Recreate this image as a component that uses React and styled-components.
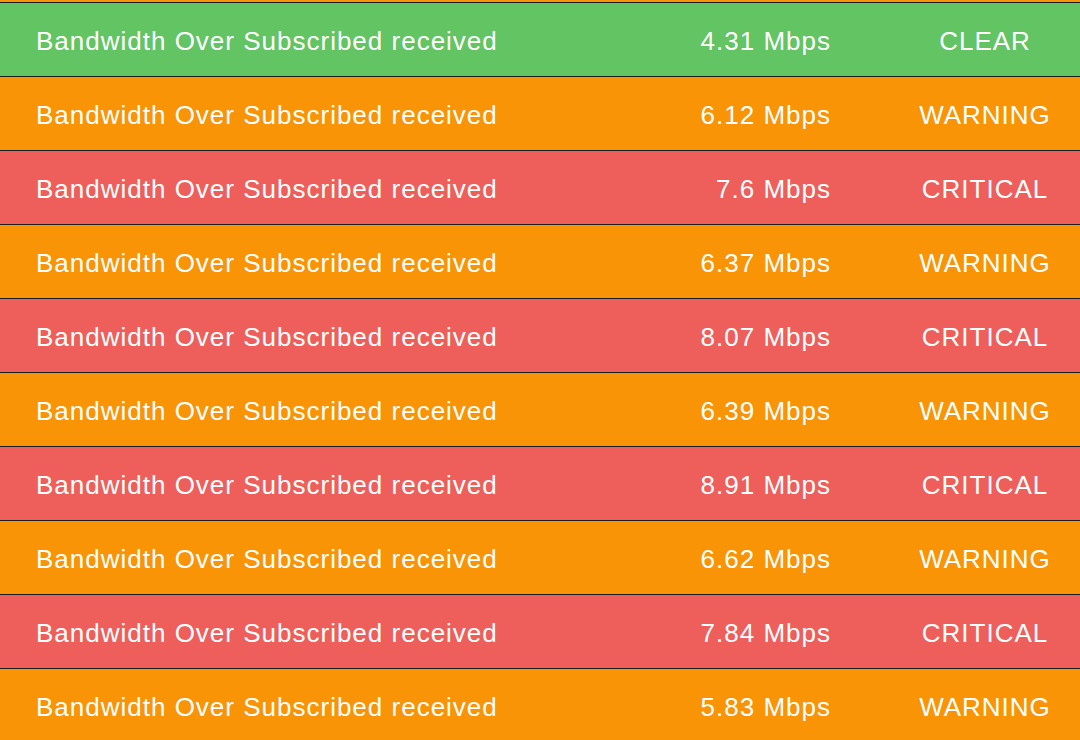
import React from 'react';
import styled, { createGlobalStyle } from 'styled-components';

const alerts = [
  { rate: '5.95 Mbps', status: 'WARNING' },
  { rate: '4.31 Mbps', status: 'CLEAR' },
  { rate: '6.12 Mbps', status: 'WARNING' },
  { rate: '7.6 Mbps', status: 'CRITICAL' },
  { rate: '6.37 Mbps', status: 'WARNING' },
  { rate: '8.07 Mbps', status: 'CRITICAL' },
  { rate: '6.39 Mbps', status: 'WARNING' },
  { rate: '8.91 Mbps', status: 'CRITICAL' },
  { rate: '6.62 Mbps', status: 'WARNING' },
  { rate: '7.84 Mbps', status: 'CRITICAL' },
  { rate: '5.83 Mbps', status: 'WARNING' },
  { rate: '6.04 Mbps', status: 'CRITICAL' },
];

const colors = {
  CLEAR: '#62c462',
  WARNING: '#f89406',
  CRITICAL: '#ee5f5b',
};

export default function App() {
  return (
    <>
      <GlobalStyle />
      <Viewport>
        <AlertList>
          {alerts.map((a, i) => (
            <AlertRow key={i} $status={a.status}>
              <Name>Bandwidth Over Subscribed received</Name>
              <Rate>{a.rate}</Rate>
              <Status>{a.status}</Status>
            </AlertRow>
          ))}
        </AlertList>
      </Viewport>
    </>
  );
}

// --- STYLED COMPONENTS ---

const GlobalStyle = createGlobalStyle`
  html, body {
    margin: 0;
    padding: 0;
    background: #1c1c1c;
  }
  body {
    font-family: "Liberation Sans", Arial, sans-serif;
  }
`;

// the list is scrolled: the previous row peeks in at the top
const Viewport = styled.div`
  width: 1080px;
  height: 740px;
  overflow: hidden;
`;

const AlertList = styled.div`
  display: flex;
  flex-direction: column;
  gap: 1px;
  background: #1c1c1c;
  margin-top: -71px;
`;

const AlertRow = styled.div`
  display: grid;
  grid-template-columns: 1fr 180px 190px;
  column-gap: 60px;
  align-items: center;
  box-sizing: border-box;
  height: 73px;
  padding: 3px 0 0 36px;
  background: ${(p) => colors[p.$status]};
  color: #fff;
  font-size: 26px;
  letter-spacing: 1px;
`;

const Name = styled.div`
  white-space: nowrap;
`;

const Rate = styled.div`
  text-align: right;
  white-space: nowrap;
  margin-right: -1px;
`;

const Status = styled.div`
  text-align: center;
`;
